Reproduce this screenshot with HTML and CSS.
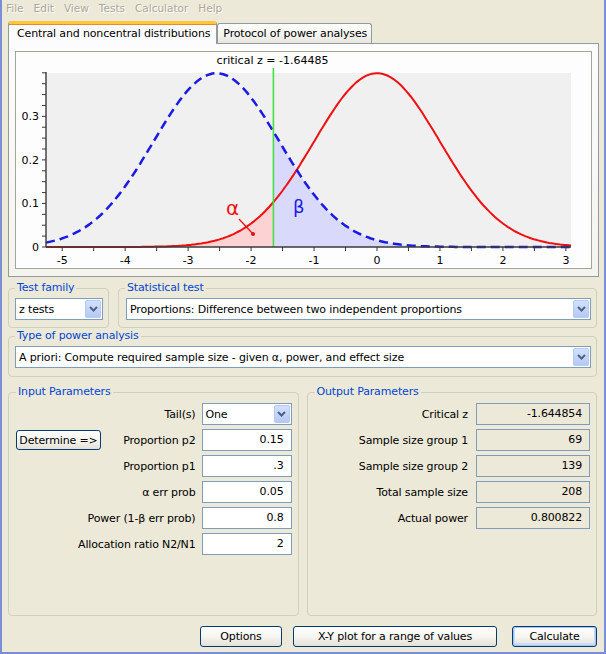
FILE: index.html
```html
<!DOCTYPE html>
<html lang="en">
<head>
    <meta charset="UTF-8">
    <title>G*Power</title>
    <link rel="stylesheet" href="styles.css">
</head>
<body>
    <div class="window">
        <div class="menubar">
            <span>File</span>
            <span>Edit</span>
            <span>View</span>
            <span>Tests</span>
            <span>Calculator</span>
            <span>Help</span>
        </div>

        <div class="tab-strip">
            <div class="tab active">Central and noncentral distributions</div>
            <div class="tab">Protocol of power analyses</div>
        </div>
        <div class="tab-panel">
            <div class="plot-box">
                <svg id="plot" width="575" height="216" viewBox="16 52 575 216">
                    <rect class="plot-bg" x="46" y="73" width="525" height="174"/>
                    <path id="alpha-fill" class="alpha-fill"/>
                    <path id="beta-fill" class="beta-fill"/>
                    <path id="h0-curve" class="h0-curve"/>
                    <path id="h1-curve" class="h1-curve"/>
                    <line class="crit-line" x1="273.4" y1="68" x2="273.4" y2="247"/>
                    <g id="ticks" class="ticks"></g>
                    <line class="axis" x1="46" y1="72" x2="46" y2="247"/>
                    <line class="axis" x1="46" y1="247" x2="571" y2="247"/>
                    <text class="plot-label" x="272.5" y="64" text-anchor="middle">critical z = -1.64485</text>
                    <text class="greek alpha" x="226" y="215">α</text>
                    <text class="greek beta" x="293" y="213">β</text>
                    <line class="alpha-pointer" x1="239" y1="219" x2="253" y2="234"/>
                    <circle class="alpha-dot" cx="253" cy="234" r="2"/>
                </svg>
            </div>
        </div>

        <div class="row row-top">
            <fieldset class="group family">
                <legend>Test family</legend>
                <div class="combo">
                    <span class="combo-text">z tests</span>
                    <span class="arrow"><svg width="9" height="6" viewBox="0 0 9 6"><path d="M1 1 L4.5 4.5 L8 1"/></svg></span>
                </div>
            </fieldset>
            <fieldset class="group stat-test">
                <legend>Statistical test</legend>
                <div class="combo">
                    <span class="combo-text">Proportions: Difference between two independent proportions</span>
                    <span class="arrow"><svg width="9" height="6" viewBox="0 0 9 6"><path d="M1 1 L4.5 4.5 L8 1"/></svg></span>
                </div>
            </fieldset>
        </div>

        <div class="row row-type">
            <fieldset class="group analysis-type">
                <legend>Type of power analysis</legend>
                <div class="combo">
                    <span class="combo-text">A priori: Compute required sample size - given α, power, and effect size</span>
                    <span class="arrow"><svg width="9" height="6" viewBox="0 0 9 6"><path d="M1 1 L4.5 4.5 L8 1"/></svg></span>
                </div>
            </fieldset>
        </div>

        <div class="row row-params">
            <fieldset class="group params input-params">
                <legend>Input Parameters</legend>
                <div class="param-list">
                    <div class="param-row">
                        <span class="label">Tail(s)</span>
                        <div class="combo small">
                            <span class="combo-text">One</span>
                            <span class="arrow"><svg width="9" height="6" viewBox="0 0 9 6"><path d="M1 1 L4.5 4.5 L8 1"/></svg></span>
                        </div>
                    </div>
                    <div class="param-row">
                        <button class="btn determine">Determine =&gt;</button>
                        <span class="label">Proportion p2</span>
                        <div class="field">0.15</div>
                    </div>
                    <div class="param-row">
                        <span class="label">Proportion p1</span>
                        <div class="field">.3</div>
                    </div>
                    <div class="param-row">
                        <span class="label">α err prob</span>
                        <div class="field">0.05</div>
                    </div>
                    <div class="param-row">
                        <span class="label">Power (1-β err prob)</span>
                        <div class="field">0.8</div>
                    </div>
                    <div class="param-row">
                        <span class="label">Allocation ratio N2/N1</span>
                        <div class="field">2</div>
                    </div>
                </div>
            </fieldset>
            <fieldset class="group params output-params">
                <legend>Output Parameters</legend>
                <div class="param-list out">
                    <div class="param-row">
                        <span class="label">Critical z</span>
                        <div class="field readonly">-1.644854</div>
                    </div>
                    <div class="param-row">
                        <span class="label">Sample size group 1</span>
                        <div class="field readonly">69</div>
                    </div>
                    <div class="param-row">
                        <span class="label">Sample size group 2</span>
                        <div class="field readonly">139</div>
                    </div>
                    <div class="param-row">
                        <span class="label">Total sample size</span>
                        <div class="field readonly">208</div>
                    </div>
                    <div class="param-row">
                        <span class="label">Actual power</span>
                        <div class="field readonly">0.800822</div>
                    </div>
                </div>
            </fieldset>
        </div>

        <div class="button-row">
            <button class="btn options">Options</button>
            <button class="btn xy-plot">X-Y plot for a range of values</button>
            <button class="btn calculate default">Calculate</button>
        </div>
    </div>

    <script>
        // plot coordinates are in page pixels (svg viewBox is aligned to the page)
        const X = z => 377 + 62.96 * z;
        const Y = p => 247 - 435.5 * p;
        const pdf = (z, mu) => Math.exp(-0.5 * (z - mu) * (z - mu)) / Math.sqrt(2 * Math.PI);

        const zMin = (46 - 377) / 62.96;
        const zMax = (571 - 377) / 62.96;
        const crit = -1.64485;
        const delta = -2.55;

        function points(mu, from, to) {
            const pts = [];
            for (let i = 0; i <= 240; i++) {
                const z = from + (to - from) * i / 240;
                pts.push(X(z).toFixed(1) + ',' + Y(pdf(z, mu)).toFixed(1));
            }
            return pts;
        }

        function line(pts) {
            return 'M' + pts.join(' L');
        }

        function area(mu, from, to) {
            return 'M' + X(from).toFixed(1) + ',247 L' + points(mu, from, to).join(' L') + ' L' + X(to).toFixed(1) + ',247 Z';
        }

        document.getElementById('h0-curve').setAttribute('d', line(points(0, zMin, zMax)));
        document.getElementById('h1-curve').setAttribute('d', line(points(delta, zMin, zMax)));
        document.getElementById('alpha-fill').setAttribute('d', area(0, zMin, crit));
        document.getElementById('beta-fill').setAttribute('d', area(delta, crit, zMax));

        // ticks and labels
        const ns = 'http://www.w3.org/2000/svg';
        const ticks = document.getElementById('ticks');

        function add(tag, attrs, text) {
            const el = document.createElementNS(ns, tag);
            Object.keys(attrs).forEach(k => el.setAttribute(k, attrs[k]));
            if (text !== undefined) el.textContent = text;
            ticks.appendChild(el);
        }

        for (let k = 0; k <= 16; k++) {
            const y = Y(k * 0.025);
            add('line', { x1: 42, y1: y, x2: 46, y2: y });
            if (k % 4 === 0 && k < 16) {
                add('text', { x: 39, y: y + 4, 'text-anchor': 'end', class: 'plot-label' }, k === 0 ? '0' : (k / 40).toString());
            }
        }

        for (let z = -5; z <= 3; z += 0.5) {
            add('line', { x1: X(z), y1: 247, x2: X(z), y2: 251 });
            if (Number.isInteger(z)) {
                add('text', { x: X(z), y: 264, 'text-anchor': 'middle', class: 'plot-label' }, z.toString());
            }
        }
    </script>
</body>
</html>
```

FILE: styles.css
```css
* {
    box-sizing: border-box;
}

body {
    margin: 0;
    background-color: #ece9d8;
    font-family: "DejaVu Sans", sans-serif;
    font-size: 11px;
    letter-spacing: -0.15px;
    color: #000;
}

.window {
    width: 606px;
    height: 654px;
    background-color: #ece9d8;
    border-left: 2px solid #7a8ed6;
    border-right: 2px solid #7a8ed6;
    border-bottom: 2px solid #7a8ed6;
    overflow: hidden;
}

/* menu */

.menubar {
    display: flex;
    height: 21px;
    padding: 1px 0 0 4px;
    line-height: 14px;
    font-size: 10.5px;
    letter-spacing: 0;
}

.menubar span {
    color: #aca899;
    text-shadow: 1px 1px 0 #fff;
    margin-right: 10px;
}

/* tabs */

.tab-strip {
    display: flex;
    align-items: flex-end;
    margin-left: 6px;
    height: 22px;
}

.tab {
    height: 20px;
    padding: 3px 4px 0 5px;
    border: 1px solid #919b9c;
    border-bottom: none;
    border-radius: 3px 3px 0 0;
    background: linear-gradient(#ffffff, #f3f3ef 60%, #e6e5dd);
    white-space: nowrap;
    letter-spacing: -0.15px;
}

.tab.active {
    position: relative;
    z-index: 1;
    height: 23px;
    margin-bottom: -1px;
    padding: 3px 6px 0 8px;
    background: #fcfcfe;
    border-top: 3px solid #ffc83c;
    box-shadow: inset 0 1px 0 #e68b2c;
    border-radius: 3px 3px 0 0;
}

.tab-panel {
    height: 234px;
    margin: 0 5px 0 6px;
    padding: 7px 0 0 6px;
    border: 1px solid #919b9c;
    background: linear-gradient(#fcfcfe, #f4f3ee);
}

.plot-box {
    width: 577px;
    height: 218px;
    border: 1px solid #a5a597;
    background-color: #fdfdfd;
}

#plot {
    display: block;
}

.plot-bg {
    fill: #f0f0f0;
}

.alpha-fill {
    fill: #fcd2d2;
}

.beta-fill {
    fill: #d9d9fb;
}

.h0-curve {
    fill: none;
    stroke: #f01010;
    stroke-width: 2;
}

.h1-curve {
    fill: none;
    stroke: #1a1ae6;
    stroke-width: 2.5;
    stroke-dasharray: 9 5;
}

.crit-line {
    stroke: #44e044;
    stroke-width: 1.6;
}

.axis {
    stroke: #3a3a3a;
    stroke-width: 1.4;
}

.ticks line {
    stroke: #3a3a3a;
    stroke-width: 1;
}

.plot-label {
    font-family: "DejaVu Sans", sans-serif;
    font-size: 11px;
    letter-spacing: 0;
    fill: #000;
}

.greek {
    font-family: "DejaVu Sans", sans-serif;
}

.alpha {
    font-size: 20px;
    fill: #f01010;
}

.beta {
    font-size: 18px;
    fill: #1a1ae6;
}

.alpha-pointer {
    stroke: #f01010;
    stroke-width: 1.3;
}

.alpha-dot {
    fill: #e01010;
}

/* group boxes */

.row {
    display: flex;
    gap: 9px;
    margin: 0 7px 0 6px;
}

.row-top {
    margin-top: 4px;
}

.row-type {
    margin-top: 1px;
}

.row-params {
    margin-top: 8px;
    gap: 8px;
}

.group {
    margin: 0;
    min-width: 0;
    padding: 3px 5px 7px 6px;
    border: 1px solid #d0d0bf;
    border-radius: 4px;
}

.group legend {
    padding: 0 2px;
    line-height: 14px;
    color: #0046d5;
}

.family {
    width: 101px;
    flex: none;
}

.stat-test {
    flex: 1;
    padding-left: 7px;
}

.stat-test legend {
    margin-left: -1px;
}

.analysis-type {
    flex: 1;
    padding-bottom: 8px;
}

.params {
    flex: 1;
    height: 231px;
    padding: 4px 6px 0 7px;
}

/* combo boxes */

.combo {
    display: flex;
    align-items: center;
    height: 22px;
    background-color: #fff;
    border: 1px solid #7f9db9;
}

.combo-text {
    flex: 1;
    padding-left: 3px;
    white-space: nowrap;
    overflow: hidden;
}

.arrow {
    display: flex;
    align-items: center;
    justify-content: center;
    width: 16px;
    height: 18px;
    margin-right: 1px;
    border: 1px solid #b5c9f5;
    border-radius: 2px;
    background: linear-gradient(#d2e0fd, #b6c9f3);
}

.arrow path {
    fill: none;
    stroke: #4d6185;
    stroke-width: 2;
}

/* parameter rows */

.param-list {
    display: flex;
    flex-direction: column;
    gap: 4px;
}

.param-row {
    display: flex;
    align-items: center;
    gap: 6px;
    height: 22px;
}

.param-row .label {
    flex: 1;
    text-align: right;
    white-space: nowrap;
}

.param-row .combo,
.param-row .field {
    flex: none;
    width: 90px;
}

.param-list.out .param-row {
    gap: 8px;
}

.param-list.out .field {
    width: 114px;
}

.field {
    height: 22px;
    line-height: 20px;
    padding-right: 7px;
    text-align: right;
    background-color: #fff;
    border: 1px solid #7f9db9;
}

.field.readonly {
    background-color: #ece9d8;
}

/* buttons */

.btn {
    height: 21px;
    padding: 0;
    font-family: inherit;
    font-size: 11px;
    letter-spacing: -0.15px;
    color: #000;
    border: 1px solid #003c74;
    border-radius: 3px;
    background: linear-gradient(#ffffff, #f5f4ef 55%, #e3e0d5);
}

.btn.determine {
    flex: none;
    height: 20px;
    width: 85px;
}

.button-row {
    display: flex;
    justify-content: flex-end;
    margin: 10px 7px 0 0;
}

.options {
    width: 82px;
    margin-right: 11px;
}

.xy-plot {
    width: 204px;
    margin-right: 15px;
}

.calculate {
    width: 85px;
}

.btn.default {
    box-shadow: inset 0 0 0 1px #a6c4f4, inset 0 -1px 0 2px #c9daf7;
}
```
